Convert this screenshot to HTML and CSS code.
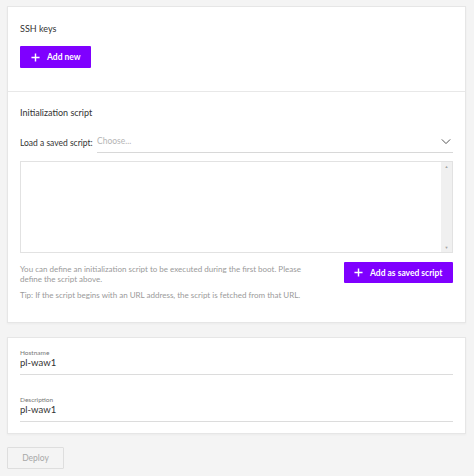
FILE: index.html
```html
<!DOCTYPE html>
<html lang="en">
<head>
    <meta charset="UTF-8">
    <meta name="viewport" content="width=device-width, initial-scale=1.0">
    <title>Deploy</title>
    <link rel="stylesheet" href="styles.css">
</head>
<body>

    <div class="card">
        <section class="section ssh">
            <h2 class="section-title">SSH keys</h2>
            <button class="btn-primary" type="button">
                <svg class="plus" viewBox="0 0 10 10" width="9" height="9"><path d="M5 0.5v9M0.5 5h9" stroke="#fff" stroke-width="1.6" fill="none"/></svg>
                Add new
            </button>
        </section>

        <section class="section init">
            <h2 class="section-title">Initialization script</h2>

            <div class="load-row">
                <label class="load-label">Load a saved script:</label>
                <div class="select">
                    <span class="placeholder">Choose...</span>
                    <svg class="chevron" viewBox="0 0 12 8" width="10" height="7"><path d="M1 1.5l5 5 5-5" stroke="#555" stroke-width="1.2" fill="none"/></svg>
                </div>
            </div>

            <div class="script-box">
                <textarea class="script-input"></textarea>
                <div class="scrollbar">
                    <span class="arrow">&#9650;</span>
                    <span class="arrow">&#9660;</span>
                </div>
            </div>

            <div class="help-row">
                <div class="help">
                    <p>You can define an initialization script to be executed during the first boot. Please define the script above.</p>
                    <p>Tip: If the script begins with an URL address, the script is fetched from that URL.</p>
                </div>
                <button class="btn-primary btn-save" type="button">
                    <svg class="plus" viewBox="0 0 10 10" width="9" height="9"><path d="M5 0.5v9M0.5 5h9" stroke="#fff" stroke-width="1.6" fill="none"/></svg>
                    Add as saved script
                </button>
            </div>
        </section>
    </div>

    <div class="card card-fields">
        <div class="field">
            <label class="field-label">Hostname</label>
            <div class="field-value">pl-waw1</div>
        </div>
        <div class="field">
            <label class="field-label">Description</label>
            <div class="field-value">pl-waw1</div>
        </div>
    </div>

    <button class="btn-deploy" type="button" disabled>Deploy</button>

</body>
</html>
```

FILE: styles.css
```css
body {
    font-family: Lato, 'Open Sans', sans-serif;
    background-color: #f4f4f4;
    color: #333;
    margin: 0;
    padding: 6px 8px 0 7px;
}

.card {
    background-color: #ffffff;
    border: 1px solid #e6e6e6;
    box-shadow: 0 1px 2px rgba(0, 0, 0, 0.04);
}

.section {
    padding: 0 12px 0 12px;
}

.section-title {
    font-size: 9px;
    font-weight: normal;
    line-height: 12px;
    margin: 0;
    color: #333;
}

.ssh {
    padding-top: 16px;
    padding-bottom: 23px;
    border-bottom: 1px solid #e8e8e8;
}

.ssh .section-title {
    margin-bottom: 11px;
}

.btn-primary {
    display: flex;
    align-items: center;
    gap: 7px;
    background-color: #7f00ff;
    color: #ffffff;
    border: none;
    border-radius: 1px;
    font-family: inherit;
    font-size: 8.5px;
    font-weight: bold;
    height: 22px;
    padding: 0 10px 0 11px;
    cursor: pointer;
}

.ssh .btn-primary {
    width: 71px;
}

.init {
    padding-top: 15px;
    padding-bottom: 22px;
}

.load-row {
    display: flex;
    align-items: flex-end;
    margin-top: 13px;
}

.load-label {
    font-size: 8.5px;
    width: 77px;
    line-height: 12px;
    padding-bottom: 4px;
}

.select {
    flex: 1;
    display: flex;
    justify-content: space-between;
    align-items: center;
    border-bottom: 1px solid #d8d8d8;
    height: 18px;
    padding-bottom: 2px;
}

.placeholder {
    font-size: 8.5px;
    color: #b5b5b5;
}

.chevron {
    margin-right: 2px;
}

.script-box {
    display: flex;
    margin-top: 8px;
    height: 90px;
    border: 1px solid #e2e2e2;
    box-shadow: inset 0 1px 2px rgba(0, 0, 0, 0.05);
}

.script-input {
    flex: 1;
    border: none;
    resize: none;
    outline: none;
    overflow: hidden;
}

.scrollbar {
    width: 11px;
    background-color: #f0f0f0;
    display: flex;
    flex-direction: column;
    justify-content: space-between;
    align-items: center;
    padding: 2px 0;
}

.arrow {
    font-size: 4px;
    color: #a3a3a3;
}

.help-row {
    display: flex;
    justify-content: space-between;
    align-items: flex-start;
    margin-top: 9px;
}

.help {
    width: 296px;
    font-size: 8px;
    color: #9a9a9a;
    line-height: 10px;
    padding-top: 2px;
}

.help p {
    margin: 0 0 6px 0;
}

.help p:last-child {
    margin-bottom: 0;
}

.btn-save {
    width: 109px;
    height: 21px;
    padding-left: 10px;
}

.card-fields {
    margin-top: 14px;
    padding: 10px 12px 11px 12px;
}

.field + .field {
    margin-top: 20px;
}

.field-label {
    display: block;
    font-size: 6.5px;
    color: #777;
    line-height: 9px;
}

.field-value {
    font-size: 9.5px;
    color: #333;
    line-height: 12px;
    padding-bottom: 5px;
    border-bottom: 1px solid #dcdcdc;
}

.btn-deploy {
    margin-top: 13px;
    width: 57px;
    height: 22px;
    background-color: #f4f4f4;
    border: 1px solid #dedede;
    border-radius: 1px;
    color: #a8a8a8;
    font-family: inherit;
    font-size: 8.5px;
}
```
